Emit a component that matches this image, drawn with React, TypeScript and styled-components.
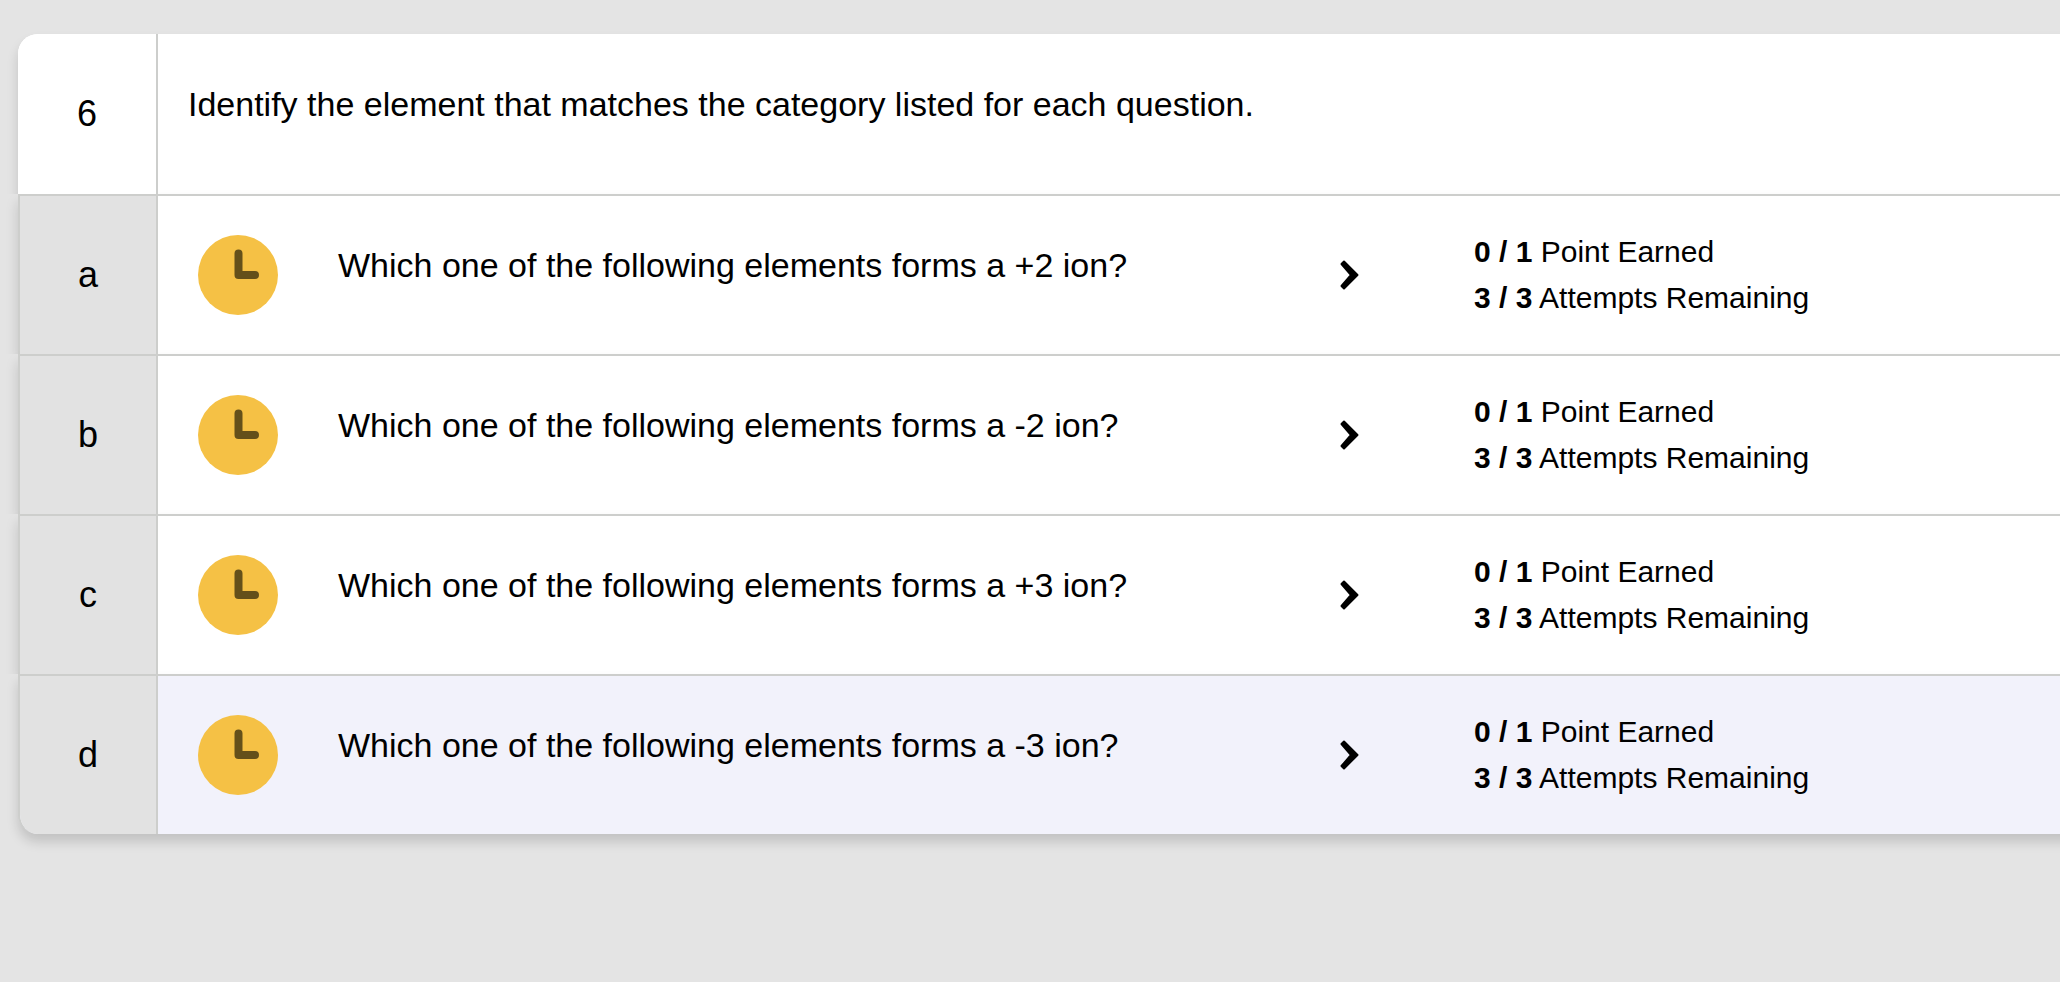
import React from "react";
import styled, { createGlobalStyle } from "styled-components";

const line = "#cdcecc";
const page = "#e4e4e4";

const GlobalStyle = createGlobalStyle`
  *, *::before, *::after { box-sizing: border-box; }
  body {
    margin: 0;
    background: ${page};
    color: #000;
    font-family: "Liberation Sans", Arial, Helvetica, sans-serif;
    font-size: 34px;
    line-height: 40px;
  }
`;

const Main = styled.main`
  padding: 34px 0 40px;
  overflow: hidden;
`;

const PartList = styled.ol`
  list-style: none;
  margin: 0;
  padding: 0;
`;

/* Rows run past the right edge so that their shadow does not fade out there. */
const Band = styled.div`
  margin-right: -20px;
  padding-left: 18px;
  background: ${page};
`;

const Row = styled.div<{ $header?: boolean; $last?: boolean; $active?: boolean }>`
  display: flex;
  min-height: 160px;
  overflow: hidden;
  background: ${(p) => (p.$active ? "#f2f2fb" : "#fff")};
  border: solid ${line};
  border-width: ${(p) => (p.$header ? "0" : "2px 0 0 2px")};
  border-radius: ${(p) => (p.$header ? "20px 0 0 0" : p.$last ? "0 0 0 20px" : "0")};
  box-shadow: 0 8px 12px rgba(0, 0, 0, 0.15);
`;

const Label = styled.div<{ $header?: boolean }>`
  display: flex;
  flex: none;
  align-items: center;
  justify-content: center;
  width: ${(p) => (p.$header ? 140 : 138)}px;
  border-right: 2px solid ${line};
  background: ${(p) => (p.$header ? "#fff" : "#e2e2e2")};
  font-size: 36px;
`;

const Title = styled.h1`
  margin: 0;
  padding: 50px 30px;
  font-size: inherit;
  font-weight: 400;
`;

const Content = styled.div`
  display: flex;
  flex: 1;
  align-items: center;
  min-width: 0;
  padding-left: 40px;
`;

const Clock = styled.svg`
  flex: none;
  width: 80px;
  height: 80px;
`;

const Prompt = styled.p`
  flex: 1;
  margin: 0;
  padding: 0 40px 20px 60px;
`;

const OpenButton = styled.button`
  display: flex;
  flex: none;
  align-items: center;
  width: 134px;
  height: 60px;
  padding: 0;
  border: 0;
  background: none;
  color: inherit;
  cursor: pointer;
`;

const Status = styled.div`
  flex: none;
  width: 606px;
  font-size: 30px;
  line-height: 46px;
`;

const StatusLine = styled.p`
  margin: 0;
`;

const parts = [
  { id: "a", ion: "+2" },
  { id: "b", ion: "-2" },
  { id: "c", ion: "+3" },
  { id: "d", ion: "-3" },
];

function PendingIcon() {
  return (
    <Clock viewBox="0 0 80 80" role="img" aria-label="Not attempted">
      <circle cx="40" cy="40" r="40" fill="#f5c145" />
      <path
        d="M40.5 18.5V40H57"
        fill="none"
        stroke="#64501a"
        strokeWidth="8"
        strokeLinecap="round"
        strokeLinejoin="round"
      />
    </Clock>
  );
}

function Chevron() {
  return (
    <svg width="20" height="30" viewBox="0 0 20 30" aria-hidden="true">
      <path
        d="M4 1.5 17.5 15 4 28.5 1.5 26 11 15 1.5 4Z"
        fill="currentColor"
        stroke="currentColor"
        strokeWidth="2"
        strokeLinejoin="round"
      />
    </svg>
  );
}

export default function App() {
  const [active, setActive] = React.useState("d");
  return (
    <>
      <GlobalStyle />
      <Main>
        <Band>
          <Row $header>
            <Label $header>6</Label>
            <Title>Identify the element that matches the category listed for each question.</Title>
          </Row>
        </Band>
        <PartList>
          {parts.map((part, i) => (
            <Band as="li" key={part.id}>
              <Row $last={i === parts.length - 1} $active={active === part.id}>
                <Label>{part.id}</Label>
                <Content>
                  <PendingIcon />
                  <Prompt>Which one of the following elements forms a {part.ion} ion?</Prompt>
                  <OpenButton
                    type="button"
                    aria-label={`Open part ${part.id}`}
                    onClick={() => setActive(part.id)}
                  >
                    <Chevron />
                  </OpenButton>
                  <Status>
                    <StatusLine>
                      <strong>0 / 1</strong> Point Earned
                    </StatusLine>
                    <StatusLine>
                      <strong>3 / 3</strong> Attempts Remaining
                    </StatusLine>
                  </Status>
                </Content>
              </Row>
            </Band>
          ))}
        </PartList>
      </Main>
    </>
  );
}
